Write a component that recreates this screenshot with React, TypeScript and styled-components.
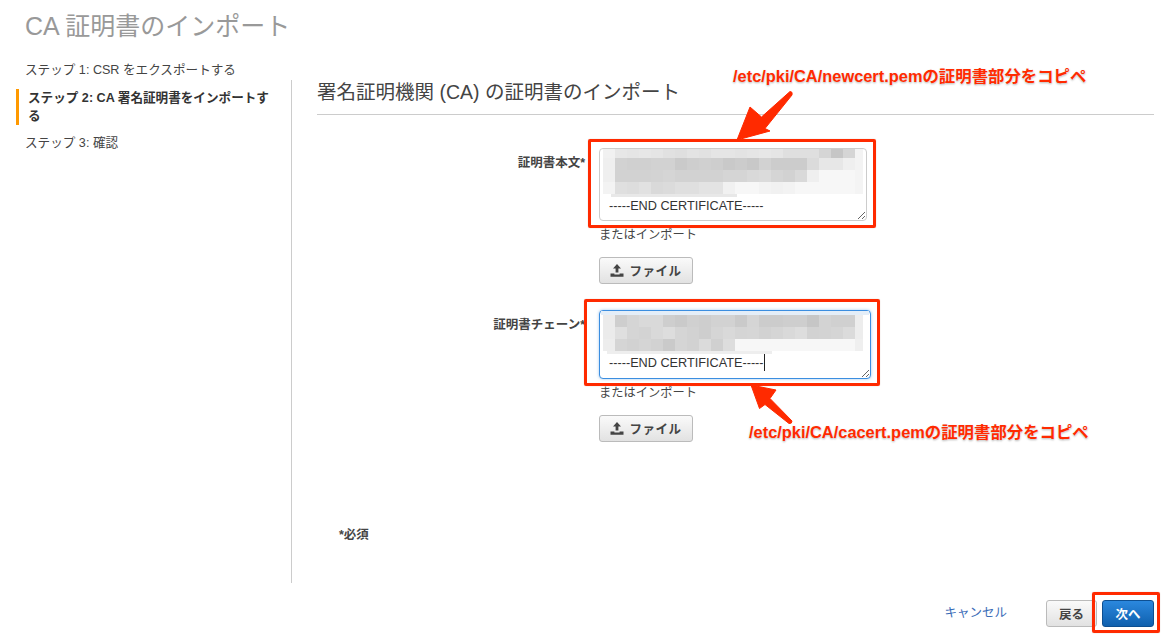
import * as React from "react";
import styled, { createGlobalStyle } from "styled-components";

const GlobalStyle = createGlobalStyle`
  html, body {
    margin: 0;
    padding: 0;
    background: #fff;
    font-family: "Liberation Sans", "Noto Sans CJK JP", sans-serif;
    color: #444;
  }
`;

const Page = styled.div`
  position: relative;
  width: 1170px;
  height: 642px;
  overflow: hidden;
  font-size: 12.5px;
`;
const Title = styled.h1`
  margin: 0;
  padding: 11px 0 0 25px;
  height: 61px;
  box-sizing: border-box;
  font-size: 25px;
  line-height: 30px;
  font-weight: 400;
  color: #999;
`;
const Body = styled.div`
  display: flex;
  height: 522px;
`;
const Sidebar = styled.div`
  flex: 0 0 291px;
  box-sizing: border-box;
  padding-left: 16px;
  font-size: 12.6px;
`;
const Step = styled.div<{ $active?: boolean }>`
  line-height: 18px;
  box-sizing: border-box;
  width: 256px;
  margin: ${(p) => (p.$active ? "10px 0 9px" : "0 0 0 -3px")};
  padding: 0 0 0 9px;
  border-left: 3px solid ${(p) => (p.$active ? "#f90" : "transparent")};
  font-weight: ${(p) => (p.$active ? 700 : 400)};
  color: ${(p) => (p.$active ? "#333" : "#444")};
`;
const Main = styled.div`
  margin-top: 19px;
  width: 863px;
  height: 503px;
  box-sizing: border-box;
  border-left: 1px solid #ccc;
  padding-left: 25px;
`;
const Heading = styled.h2`
  margin: 0;
  height: 35px;
  box-sizing: border-box;
  border-bottom: 1px solid #ccc;
  font-size: 19.5px;
  line-height: 24px;
  font-weight: 400;
  color: #444;
`;
const Form = styled.div`
  padding-top: 33px;
  display: flex;
  flex-direction: column;
  gap: 26px;
`;
const FieldRow = styled.div`
  display: flex;
  gap: 14px;
`;
const FieldLabel = styled.label`
  flex: 0 0 268px;
  text-align: right;
  font-weight: 700;
  color: #444;
  padding-top: 6px;
  line-height: 18px;
  white-space: nowrap;
`;
const Control = styled.div`
  display: flex;
  flex-direction: column;
  align-items: flex-start;
`;
const AreaWrap = styled.div`
  position: relative;
`;
const CertArea = styled.textarea<{ $focus?: boolean; $w: number; $h: number; $top: number }>`
  display: block;
  box-sizing: border-box;
  width: ${(p) => p.$w}px;
  height: ${(p) => p.$h}px;
  margin: 0;
  padding: ${(p) => p.$top}px 8px 0 9px;
  border: 1px solid ${(p) => (p.$focus ? "#3b8ee0" : "#ccc")};
  border-radius: 4px;
  outline: none;
  box-shadow: ${(p) => (p.$focus ? "0 0 3px rgba(59, 142, 224, 0.5)" : "none")};
  font-family: "Liberation Sans", "Noto Sans CJK JP", sans-serif;
  font-size: 12.7px;
  line-height: 16px;
  color: #333;
  background: #fff;
  overflow: hidden;
  resize: both;
`;
const Mosaic = styled.div<{ $top: number; $firstRow: number }>`
  position: absolute;
  left: 4px;
  top: ${(p) => p.$top}px;
  display: grid;
  grid-template-columns: repeat(21, 12px) 8px;
  grid-template-rows: ${(p) => p.$firstRow}px;
  grid-auto-rows: 12px;
  filter: blur(0.4px) brightness(0.97);
  pointer-events: none;
`;
const Tile = styled.div<{ $shade: string }>`
  background: ${(p) => p.$shade};
`;
const BlurStrip = styled.div<{ $x: number; $y: number; $w: number; $h: number; $shade: string }>`
  position: absolute;
  left: ${(p) => p.$x}px;
  top: ${(p) => p.$y}px;
  width: ${(p) => p.$w}px;
  height: ${(p) => p.$h}px;
  background: ${(p) => p.$shade};
  filter: blur(0.4px);
`;
const Caret = styled.div`
  position: absolute;
  left: 165px;
  top: 44px;
  width: 1px;
  height: 17px;
  background: #222;
`;
const OrImport = styled.div`
  margin-top: 6px;
  font-size: 12.25px;
  line-height: 16px;
  color: #444;
`;
const Button = styled.button`
  display: inline-flex;
  align-items: center;
  justify-content: center;
  box-sizing: border-box;
  height: 27px;
  padding: 0;
  border: 1px solid #bbb;
  border-radius: 3px;
  background: linear-gradient(#fafafa, #e2e2e2);
  font-family: "Liberation Sans", "Noto Sans CJK JP", sans-serif;
  font-size: 12.5px;
  font-weight: 700;
  color: #444;
`;
const FileButton = styled(Button)`
  width: 94px;
  margin-top: 14px;
  gap: 5px;
  letter-spacing: 0.5px;
`;
const Required = styled.div`
  margin: 0;
  padding: 85px 0 0 22px;
  font-weight: 700;
  line-height: 16px;
  color: #444;
`;
const Footer = styled.div`
  display: flex;
  align-items: center;
  justify-content: flex-end;
  height: 27px;
  margin-top: 17px;
  padding-right: 16px;
`;
const CancelLink = styled.a`
  margin-right: 39px;
  color: #3b6cb7;
  line-height: 27px;
`;
const BackButton = styled(Button)`
  width: 51px;
  margin-right: 5px;
`;
const NextButton = styled(Button)`
  width: 52px;
  border-color: #0d4f91;
  background: linear-gradient(#2b88de, #0f60ae);
  color: #fff;
`;
const RedFrame = styled.div<{ $x: number; $y: number; $w: number; $h: number }>`
  position: absolute;
  left: ${(p) => p.$x}px;
  top: ${(p) => p.$y}px;
  width: ${(p) => p.$w}px;
  height: ${(p) => p.$h}px;
  box-sizing: border-box;
  border: 3px solid #ff2a00;
  border-radius: 2px;
  box-shadow: 0 0 1px rgba(120, 40, 20, 0.4);
`;
const Note = styled.div<{ $x: number; $y: number }>`
  position: absolute;
  left: ${(p) => p.$x}px;
  top: ${(p) => p.$y}px;
  font-size: 16.4px;
  line-height: 18px;
  font-weight: 700;
  color: #ff2a00;
  white-space: nowrap;
  text-shadow: 0 0 2px #fff, 0 1px 2px rgba(0, 0, 0, 0.35);
`;
const ArrowLayer = styled.svg`
  position: absolute;
  left: 0;
  top: 0;
  width: 1170px;
  height: 642px;
  pointer-events: none;
`;

const g = (v: string) => `#${v}${v}${v}`;
const shades = (row: string) => row.split(" ").map(g);

const bodyTiles = [
  "f8 ee ec ee ec e8 e6 ea e8 ec ec ea ec ee ec e6 e6 e6 dc cc dc fa",
  "f6 d8 d6 d6 d8 d8 d0 d4 d6 d4 cf d2 ce d8 d2 d2 d2 e2 ee ee f6 fa",
  "f6 d8 d8 d8 da dc d8 d8 d8 d8 dc dc e0 e2 dc d8 e0 f6 ff ff ff fc",
  "fa e6 e4 e8 e0 e2 e6 e6 ea ea f8 ff ff fa f8 fa ff ff ff ff ff fc",
].flatMap(shades);

const chainTiles = [
  "f2 d4 dc e0 e0 d4 d0 d6 d4 d8 d8 d0 dc d2 d2 d4 d4 cc da d6 d6 f4",
  "f2 e6 dc da e0 e4 dc d8 d4 dc e0 dc dd d8 dc e0 e4 d8 da dc e2 f4",
  "f4 dc d8 dc d8 d0 dc d8 e2 d6 e4 ff ff ff ff ff ff ff ff ff ff f6",
].flatMap(shades);

const UploadIcon = () => (
  <svg width="14" height="13" viewBox="0 0 14 13">
    <path d="M7 0 L11 4.4 H8.4 V8.6 H5.6 V4.4 H3 Z" fill="#444" />
    <path d="M0.5 9.6 H4.4 V10.6 H9.6 V9.6 H13.5 V12.8 H0.5 Z" fill="#444" />
  </svg>
);

const App = () => {
  return (
    <Page>
      <GlobalStyle />
      <Title>CA 証明書のインポート</Title>
      <Body>
        <Sidebar>
          <Step>ステップ 1: CSR をエクスポートする</Step>
          <Step $active>ステップ 2: CA 署名証明書をインポートする</Step>
          <Step>ステップ 3: 確認</Step>
        </Sidebar>
        <Main>
          <Heading>署名証明機関 (CA) の証明書のインポート</Heading>
          <Form>
            <FieldRow>
              <FieldLabel>証明書本文*</FieldLabel>
              <Control>
                <AreaWrap>
                  <CertArea $w={268} $h={73} $top={49} readOnly value="-----END CERTIFICATE-----" />
                  <Mosaic $top={1} $firstRow={9}>
                    {bodyTiles.map((c, i) => (
                      <Tile key={i} $shade={c} />
                    ))}
                  </Mosaic>
                  <BlurStrip $x={12} $y={46} $w={126} $h={3} $shade="#e8e8e8" />
                </AreaWrap>
                <OrImport>またはインポート</OrImport>
                <FileButton>
                  <UploadIcon />
                  ファイル
                </FileButton>
              </Control>
            </FieldRow>
            <FieldRow>
              <FieldLabel>証明書チェーン*</FieldLabel>
              <Control>
                <AreaWrap>
                  <CertArea $focus $w={272} $h={69} $top={44} readOnly value="-----END CERTIFICATE-----" />
                  <BlurStrip $x={2} $y={1} $w={268} $h={4} $shade="#e4eef8" />
                  <Mosaic $top={5} $firstRow={12}>
                    {chainTiles.map((c, i) => (
                      <Tile key={i} $shade={c} />
                    ))}
                  </Mosaic>
                  <BlurStrip $x={8} $y={41} $w={165} $h={3} $shade="#eeeeee" />
                  <Caret />
                </AreaWrap>
                <OrImport>またはインポート</OrImport>
                <FileButton>
                  <UploadIcon />
                  ファイル
                </FileButton>
              </Control>
            </FieldRow>
          </Form>
          <Required>*必須</Required>
        </Main>
      </Body>
      <Footer>
        <CancelLink>キャンセル</CancelLink>
        <BackButton>戻る</BackButton>
        <NextButton>次へ</NextButton>
      </Footer>

      <RedFrame $x={588} $y={139} $w={288} $h={89} />
      <RedFrame $x={584} $y={299} $w={296} $h={87} />
      <RedFrame $x={1092} $y={592} $w={68} $h={41} />
      <ArrowLayer viewBox="0 0 1170 642">
        <path
          d="M737 140 L750 107 L761.5 117 L790 91.5 Q793 91.5 792 95 L765 128.5 L770 131 Z"
          fill="#ff2a00"
          stroke="#ff2a00"
          strokeLinejoin="round"
        />
        <path
          d="M751 385 L776 390 L770 398.5 L792 421 Q792 424 789 423.5 L765 404.5 L759.5 408.5 Z"
          fill="#ff2a00"
          stroke="#ff2a00"
          strokeLinejoin="round"
        />
      </ArrowLayer>
      <Note $x={733} $y={67}>/etc/pki/CA/newcert.pemの証明書部分をコピペ</Note>
      <Note $x={749} $y={423}>/etc/pki/CA/cacert.pemの証明書部分をコピペ</Note>
    </Page>
  );
};

export default App;
